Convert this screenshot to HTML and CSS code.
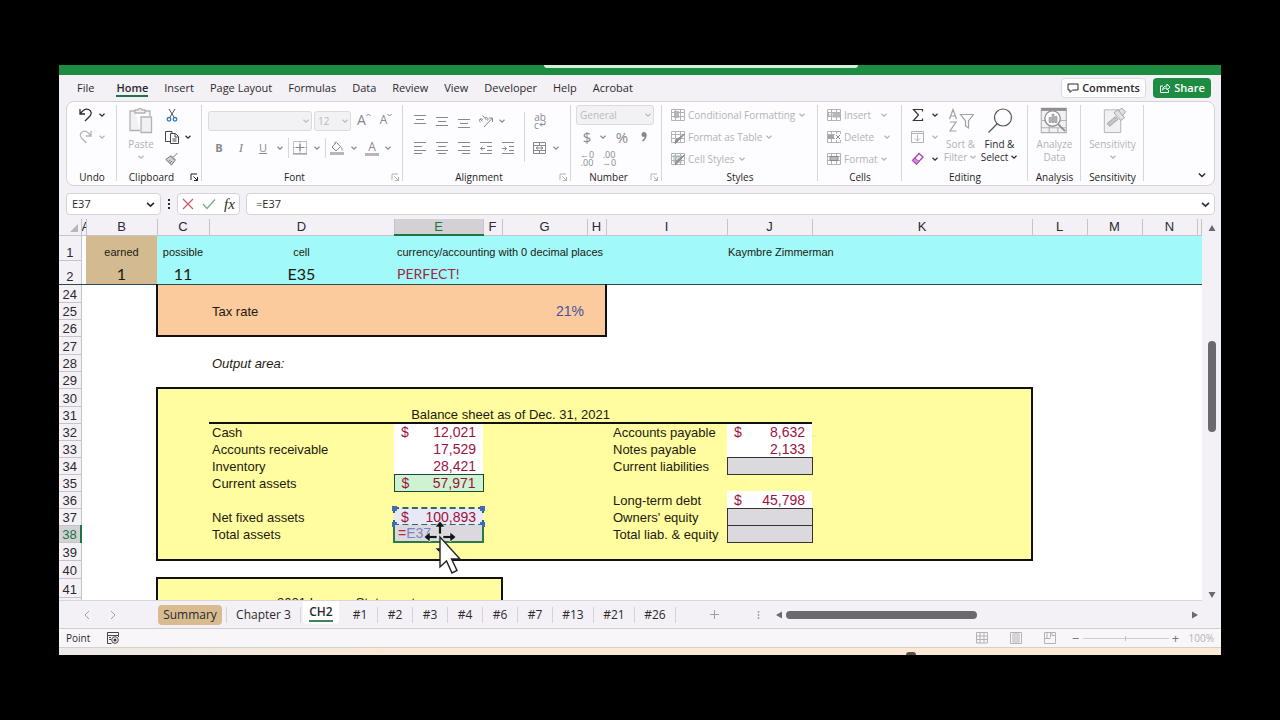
FILE: index.html
```html
<!DOCTYPE html>
<html lang="en">
<head>
<meta charset="utf-8">
<title>Workbook</title>
<link rel="stylesheet" href="styles.css">
</head>
<body>
<svg class="defs" aria-hidden="true">
  <symbol id="chev" viewBox="0 0 8 8"><path d="M1.5 2.8 4 5.2 6.5 2.8" fill="none" stroke="currentColor" stroke-width="1.2"/></symbol>
  <symbol id="launch" viewBox="0 0 9 9"><path d="M1 7V1h6M3.500 3.500 7.500 7.500M7.500 4v3.500H4" fill="none" stroke="currentColor"/></symbol>
  <symbol id="undo" viewBox="0 0 16 16"><path d="M2 2v5h5M2.300 6.700C5 3 8 1.500 10.500 2.500c3 1.200 3.500 4.500 1.500 6.500L7 14" fill="none" stroke="currentColor" stroke-width="1.300"/></symbol>
  <symbol id="redo" viewBox="0 0 16 16"><path d="M13 2v5H8M12.700 6.700C10 3 7.500 1.500 5 2.500 2 3.700 1.500 7 3.500 9l5 5" fill="none" stroke="currentColor" stroke-width="1.300"/></symbol>
  <symbol id="table" viewBox="0 0 14 14"><path d="M.5 1.500h13v11H.5zM.5 4.500h13M.5 8.500h13M4.500 1.500v11M9.500 1.500v11" fill="none" stroke="currentColor"/></symbol>
  <symbol id="more" viewBox="0 0 4 12"><path d="M1 1h2v2H1zM1 5h2v2H1zM1 9h2v2H1z" fill="currentColor"/></symbol>
</svg>
<main class="app">
  <header class="titlebar"><span class="search"></span></header>
  <nav class="menu">
    <button class="file">File</button><button class="current">Home</button><button>Insert</button><button>Page Layout</button><button>Formulas</button><button>Data</button><button>Review</button><button>View</button><button>Developer</button><button>Help</button><button>Acrobat</button>
    <span class="grow"></span>
    <button class="comments"><svg width="12" height="12" viewBox="0 0 12 12"><path d="M1 2h10v6H5.500L3 10.500V8H1z" fill="none" stroke="currentColor"/></svg>Comments</button>
    <button class="share"><svg width="12" height="12" viewBox="0 0 12 12"><path d="M4 4H1.500v6.500h8V8M3.500 8C4 5 5.500 4 8 4V2l3 3.200L8 8V6C6 6 5 6.500 3.500 8z" fill="none" stroke="currentColor"/></svg>Share</button>
  </nav>

  <section class="ribbon">
    <div class="group undo">
      <div class="tools">
        <div class="row3"><button class="ic" aria-label="Undo"><svg width="16" height="16"><use href="#undo"/></svg></button><button class="cv" aria-label="Undo list"><svg width="8" height="8"><use href="#chev"/></svg></button></div>
        <div class="row3 off"><button class="ic" aria-label="Redo"><svg width="16" height="16"><use href="#redo"/></svg></button><button class="cv" aria-label="Redo list"><svg width="8" height="8"><use href="#chev"/></svg></button></div>
      </div>
      <div class="name"><span>Undo</span></div>
    </div>

    <div class="group clip">
      <div class="tools side">
        <button class="big off"><svg width="26" height="27" viewBox="0 0 26 27"><path d="M7 4H2v19.500h10M17 4h5v5M7 6V3h3c0-2 4-2 4 0h3v3zM13 10h10.500v15.500H13z" fill="#f1f0f2" stroke="currentColor" stroke-width="1.300"/></svg><span>Paste</span><svg class="below" width="8" height="8"><use href="#chev"/></svg></button>
        <div>
          <div class="row3"><button class="ic" aria-label="Cut"><svg width="14" height="16" viewBox="0 0 14 16"><path d="M4 2l5.500 9M10 2l-5.500 9" stroke="#555" fill="none"/><circle cx="4" cy="12.300" r="1.800" fill="none" stroke="#2f7fc0" stroke-width="1.300"/><circle cx="10" cy="12.300" r="1.800" fill="none" stroke="#2f7fc0" stroke-width="1.300"/></svg></button></div>
          <div class="row3"><button class="ic" aria-label="Copy"><svg width="14" height="14" viewBox="0 0 14 14"><path d="M5 11.500H.5V1.500H7V3M5.500 3.500h5l3 3v7h-8zM10 3.500V7h3.500M7.500 9h4M7.500 11h4" fill="none" stroke="#444"/></svg></button><button class="cv" aria-label="Copy list"><svg width="8" height="8"><use href="#chev"/></svg></button></div>
          <div class="row3"><button class="ic off" aria-label="Format painter"><svg width="14" height="14" viewBox="0 0 14 14"><path d="M12.500 1 8.500 5M6 3.500 10.500 8M5.500 4 10 8.500 6.500 13 .8 7.500zM3.500 9.500l2-1.500M5 11l2-2" fill="#d5d3d7" stroke="#77757a"/></svg></button></div>
        </div>
      </div>
      <div class="name"><span>Clipboard</span><button class="launch" aria-label="Clipboard settings"><svg width="9" height="9"><use href="#launch"/></svg></button></div>
    </div>

    <div class="group font">
      <div class="tools two">
        <div class="row2">
          <span class="combo face"><select aria-label="Font" disabled><option></option></select><svg width="8" height="8"><use href="#chev"/></svg></span>
          <span class="combo size"><select aria-label="Font size" disabled><option>12</option></select><svg width="8" height="8"><use href="#chev"/></svg></span>
          <button class="ic mid letter" aria-label="Increase font size">A<svg width="5" height="8" viewBox="0 0 5 8"><path d="M.5 3l2-2 2 2" fill="none" stroke="currentColor"/></svg></button>
          <button class="ic mid letter small" aria-label="Decrease font size">A<svg width="5" height="8" viewBox="0 0 5 8"><path d="M.5 1l2 2 2-2" fill="none" stroke="currentColor"/></svg></button>
        </div>
        <div class="row2 mid">
          <button class="ic"><b>B</b></button><button class="ic"><i>I</i></button><button class="ic"><u>U</u></button><button class="cv" aria-label="Underline list"><svg width="8" height="8"><use href="#chev"/></svg></button>
          <span class="bar"></span>
          <button class="ic" aria-label="Borders"><svg width="14" height="14" viewBox="0 0 14 14"><path d="M.5.5h13v12H.5zM7 .5v12M.5 6.500h13" fill="none" stroke="currentColor" stroke-dasharray="1 1"/><path d="M0 13h14M7 3v7M3 6.500h8" stroke="currentColor" stroke-width="1.200"/></svg></button><button class="cv" aria-label="Borders list"><svg width="8" height="8"><use href="#chev"/></svg></button>
          <span class="bar"></span>
          <button class="ic" aria-label="Fill color"><svg width="14" height="14" viewBox="0 0 14 14"><path d="M6.500 1.500 2 6l4 4 4.500-4.500zM5 3V.5M10.500 6c2 1 1.500 2 1.500 3.500" fill="none" stroke="currentColor"/><path d="M0 11h14v3H0z" fill="#b9b7ba"/></svg></button><button class="cv" aria-label="Fill color list"><svg width="8" height="8"><use href="#chev"/></svg></button>
          <button class="ic fc" aria-label="Font color">A</button><button class="cv" aria-label="Font color list"><svg width="8" height="8"><use href="#chev"/></svg></button>
        </div>
      </div>
      <div class="name"><span>Font</span><button class="launch off" aria-label="Font settings"><svg width="9" height="9"><use href="#launch"/></svg></button></div>
    </div>

    <div class="group align">
      <div class="tools side">
        <div class="two mid">
          <div class="row2">
            <button class="ic" aria-label="Top align"><svg width="12" height="14" viewBox="0 0 12 14"><path d="M0 1.500h12M2 5.500h8M0 9.500h12" stroke="currentColor"/></svg></button><button class="ic" aria-label="Middle align"><svg width="12" height="14" viewBox="0 0 12 14"><path d="M0 3.500h12M2 7.500h8M0 11.500h12" stroke="currentColor"/></svg></button><button class="ic" aria-label="Bottom align"><svg width="12" height="14" viewBox="0 0 12 14"><path d="M0 5.500h12M2 9.500h8M0 13.500h12" stroke="currentColor"/></svg></button><button class="ic" aria-label="Orientation"><svg width="15" height="14" viewBox="0 0 15 14"><path d="M5 13 13.500 4M13.500 8V4H10M3.500 7.500 1 5M1.500 8a1.700 1.700 0 1 1 2.200-2M3.500 1.500l4 4.500M6 4a1.700 1.700 0 1 1 2.500 2.500" fill="none" stroke="currentColor"/></svg></button><button class="cv near" aria-label="Orientation list"><svg width="8" height="8"><use href="#chev"/></svg></button>
          </div>
          <div class="row2">
            <button class="ic" aria-label="Align left"><svg width="12" height="12" viewBox="0 0 12 12"><path d="M0 .5h12M0 4.500h8M0 8.500h12M0 11.500h8" stroke="currentColor"/></svg></button><button class="ic" aria-label="Center"><svg width="12" height="12" viewBox="0 0 12 12"><path d="M0 .5h12M2 4.500h8M0 8.500h12M2 11.500h8" stroke="currentColor"/></svg></button><button class="ic" aria-label="Align right"><svg width="12" height="12" viewBox="0 0 12 12"><path d="M0 .5h12M4 4.500h8M0 8.500h12M4 11.500h8" stroke="currentColor"/></svg></button><button class="ic" aria-label="Decrease indent"><svg width="12" height="12" viewBox="0 0 12 12"><path d="M0 .5h12M7 4.500h5M7 8.500h5M0 11.500h12M5 6.500H.5M2.500 4.500l-2 2 2 2" fill="none" stroke="currentColor"/></svg></button><button class="ic" aria-label="Increase indent"><svg width="12" height="12" viewBox="0 0 12 12"><path d="M0 .5h12M7 4.500h5M7 8.500h5M0 11.500h12M0 6.500h4.500M2.500 4.500l2 2-2 2" fill="none" stroke="currentColor"/></svg></button>
          </div>
        </div>
        <span class="bar tall"></span>
        <div class="two mid">
          <div class="row2"><button class="ic wrap" aria-label="Wrap text"><span>ab</span><span>c<svg width="7" height="7" viewBox="0 0 7 7"><path d="M6 0v3.500H1M3 1.500l-2 2 2 2" fill="none" stroke="#6f8fae"/></svg></span></button></div>
          <div class="row2"><button class="ic" aria-label="Merge and center"><svg width="14" height="14" viewBox="0 0 14 14"><path d="M.5 1.500h12v11H.5zM.5 4.500h12M.5 9.500h12M6.500 1.500v3M6.500 9.500v3M3 7h7M5 5.500 3 7l2 1.500M8 5.500 10 7 8 8.500" fill="none" stroke="currentColor"/></svg></button><button class="cv near" aria-label="Merge list"><svg width="8" height="8"><use href="#chev"/></svg></button></div>
        </div>
      </div>
      <div class="name"><span>Alignment</span><button class="launch off" aria-label="Alignment settings"><svg width="9" height="9"><use href="#launch"/></svg></button></div>
    </div>

    <div class="group number">
      <div class="tools">
        <div class="row3"><span class="combo format"><select aria-label="Number format" disabled><option>General</option></select><svg width="8" height="8"><use href="#chev"/></svg></span></div>
        <div class="row3 mid signs"><button class="ic">$</button><button class="cv" aria-label="Currency list"><svg width="8" height="8"><use href="#chev"/></svg></button><button class="ic">%</button><button class="ic comma" aria-label="Comma style"><svg width="8" height="12" viewBox="0 0 8 12"><circle cx="4" cy="3.500" r="2.500" fill="currentColor"/><path d="M5.800 3.500c.2 3-1 5-3.300 6.500" stroke="currentColor" stroke-width="1.500" fill="none"/></svg></button></div>
        <div class="row3 mid"><button class="ic dec" aria-label="Increase decimal"><span>←0</span><span>.00</span></button><button class="ic dec" aria-label="Decrease decimal"><span>.00</span><span>→0</span></button></div>
      </div>
      <div class="name"><span>Number</span><button class="launch off" aria-label="Number settings"><svg width="9" height="9"><use href="#launch"/></svg></button></div>
    </div>

    <div class="group styles">
      <div class="tools">
        <button class="row3 item off"><svg width="14" height="14" viewBox="0 0 14 14"><path d="M3 3h5v7H3z" fill="#b9b7bc"/><use href="#table"/></svg>Conditional Formatting<svg width="8" height="8"><use href="#chev"/></svg></button>
        <button class="row3 item off"><svg width="14" height="14" viewBox="0 0 14 14"><use href="#table"/><path d="M13.500 4 6 12l-2 1.500L5 10z" fill="#9d9ba0" stroke="#8a888d"/></svg>Format as Table<svg width="8" height="8"><use href="#chev"/></svg></button>
        <button class="row3 item off"><svg width="14" height="14" viewBox="0 0 14 14"><path d="M2 3h9v8H2z" fill="#cdd5df"/><use href="#table"/><path d="M13.500 3 6 11.500 4 13l1-3.500z" fill="#9d9ba0" stroke="#8a888d"/></svg>Cell Styles<svg width="8" height="8"><use href="#chev"/></svg></button>
      </div>
      <div class="name"><span>Styles</span></div>
    </div>

    <div class="group cells">
      <div class="tools">
        <button class="row3 item off"><svg width="14" height="14" viewBox="0 0 14 14"><use href="#table"/><path d="M6 5h7v4H6zM5 7H0M2 5 0 7l2 2" fill="#b9b7bc" stroke="currentColor"/></svg><span>Insert</span><svg width="8" height="8"><use href="#chev"/></svg></button>
        <button class="row3 item off"><svg width="14" height="14" viewBox="0 0 14 14"><use href="#table"/><path d="M1 5h6v4H1z" fill="#a5a3a8"/><path d="M8 4h6v6H8z" fill="#fff"/><path d="m9 5 4 4M13 5 9 9" stroke="#88868b"/></svg><span class="wide">Delete</span><svg width="8" height="8"><use href="#chev"/></svg></button>
        <button class="row3 item off"><svg width="14" height="14" viewBox="0 0 14 14"><use href="#table"/><path d="M3 4.500h8v4H3z" fill="#b9b7bc" stroke="#88868b"/></svg><span>Format</span><svg width="8" height="8"><use href="#chev"/></svg></button>
      </div>
      <div class="name"><span>Cells</span></div>
    </div>

    <div class="group editing">
      <div class="tools side">
        <div>
          <div class="row3"><button class="ic" aria-label="AutoSum"><svg width="12" height="14" viewBox="0 0 12 14"><path d="M10.500 3.500V1.500H1.500L6.500 7l-5 5.500h9v-2" fill="none" stroke="#333" stroke-width="1.200"/></svg></button><button class="cv" aria-label="AutoSum list"><svg width="8" height="8"><use href="#chev"/></svg></button></div>
          <div class="row3 off"><button class="ic" aria-label="Fill"><svg width="14" height="12" viewBox="0 0 14 12"><path d="M.5.5h12v11H.5zM.5 2.500h12M6.500 4v6M4 7.500 6.500 10 9 7.500" fill="none" stroke="currentColor"/></svg></button><button class="cv" aria-label="Fill list"><svg width="8" height="8"><use href="#chev"/></svg></button></div>
          <div class="row3"><button class="ic" aria-label="Clear"><svg width="14" height="14" viewBox="0 0 14 14"><path d="M1.500 8.500 8 1.500l4 3.500-6.500 7z" fill="#fff" stroke="#a545ae" stroke-width="1.300"/><path d="M1.500 8.500 4 6l4 3.500L5.500 12z" fill="#d08ad6" stroke="#a545ae"/></svg></button><button class="cv" aria-label="Clear list"><svg width="8" height="8"><use href="#chev"/></svg></button></div>
        </div>
        <button class="big off"><svg width="26" height="27" viewBox="0 0 26 27"><path d="M1.500 12 5 2.500 8.500 12M2.500 9h5M2 15h6L2 24h6.500M12.500 7.500h13L20.500 14v7l-3-2v-5z" fill="none" stroke="#a19fa4" stroke-width="1.200"/></svg><span>Sort &amp;</span><span>Filter<svg width="8" height="8"><use href="#chev"/></svg></span></button>
        <button class="big"><svg width="26" height="27" viewBox="0 0 26 27"><circle cx="16" cy="10.500" r="8.500" fill="none" stroke="#555" stroke-width="1.200"/><path d="M10 17 1.500 25.500" stroke="#555" stroke-width="1.300"/></svg><span>Find &amp;</span><span>Select<svg width="8" height="8"><use href="#chev"/></svg></span></button>
      </div>
      <div class="name"><span>Editing</span></div>
    </div>

    <div class="group analysis">
      <div class="tools side">
        <button class="big off"><svg width="28" height="28" viewBox="0 0 28 28"><path d="M.8 1.500h26v25H.8zM.8 21.500h26M.8 14h7M20 14h7M9 19v7.500M18 21v5.500" fill="#f1f0f2" stroke="currentColor" stroke-width="1.200"/><path d="M.8 1h26v3H.8z" fill="#8f8d92"/><circle cx="12.500" cy="12" r="8" fill="#fff" stroke="#918f94" stroke-width="1.400"/><path d="m18.500 18 7 7" stroke="#918f94" stroke-width="2"/><path d="M9 11h2v5H9zM12 7.500h2V16h-2zM15 10h2v6h-2z" fill="#c9c7cc" stroke="#88868b" stroke-width=".8"/></svg><span>Analyze</span><span>Data</span></button>
      </div>
      <div class="name"><span>Analysis</span></div>
    </div>

    <div class="group sensitivity">
      <div class="tools side">
        <button class="big off"><svg width="28" height="28" viewBox="0 0 28 28"><path d="M5 3h17v23.500H5z" fill="#f1f0f2" stroke="currentColor"/><path d="m8 17 8.500-7 2.500 3-8.500 7z" fill="#c5c3c8" stroke="#a3a1a6"/><path d="m15 6 4-3 7 8-4 3zM20 4l3-3 4 4-3 4" fill="#e2e1e4" stroke="#a3a1a6"/></svg><span>Sensitivity</span><svg class="below" width="8" height="8"><use href="#chev"/></svg></button>
      </div>
      <div class="name"><span>Sensitivity</span></div>
    </div>
    <button class="collapse" aria-label="Collapse ribbon"><svg width="10" height="10" viewBox="0 0 8 8"><use href="#chev"/></svg></button>
  </section>

  <section class="formulabar">
    <div class="box namebox"><input aria-label="Name box" value="E37"><button aria-label="Names"><svg width="11" height="11"><use href="#chev"/></svg></button></div>
    <svg class="dots" width="4" height="12"><use href="#more"/></svg>
    <div class="box actions">
      <button aria-label="Cancel"><svg width="12" height="12" viewBox="0 0 12 12"><path d="m1 1 10 10M11 1 1 11" stroke="#d0566a" stroke-width="1.200"/></svg></button>
      <button aria-label="Enter"><svg width="14" height="12" viewBox="0 0 14 12"><path d="m1 6 4 4.500L13 1.500" fill="none" stroke="#6fae84" stroke-width="1.200"/></svg></button>
      <button class="fx"><i>fx</i></button>
    </div>
    <div class="box formula"><input aria-label="Formula" value="=E37"><button aria-label="Expand formula bar"><svg width="11" height="11"><use href="#chev"/></svg></button></div>
  </section>

  <section class="sheet">
    <div class="gridwrap">
    <table class="grid">
      <colgroup><col class="cr"><col class="ca"><col class="cb"><col class="cc"><col class="cd"><col class="ce"><col class="cf"><col class="cg"><col class="cf"><col class="ci"><col class="cg"><col class="ck"><col class="cl"><col class="cl"><col class="cl"><col></colgroup>
      <thead>
        <tr><th class="corner"><svg width="8" height="8" viewBox="0 0 8 8"><path d="M8 0v8H0z" fill="#b8b6ba"/></svg></th><th>A</th><th>B</th><th>C</th><th>D</th><th class="sel">E</th><th>F</th><th>G</th><th>H</th><th>I</th><th>J</th><th>K</th><th>L</th><th>M</th><th>N</th><th></th></tr>
      </thead>
      <tbody>
        <tr class="h25 info"><th>1</th><td></td><td class="tan">earned</td><td class="cyan">possible</td><td class="cyan">cell</td><td class="cyan left" colspan="5">currency/accounting with 0 decimal places</td><td class="cyan flush" colspan="2">Kaymbre Zimmerman</td><td class="cyan" colspan="4"></td></tr>
        <tr class="h24 score"><th>2</th><td></td><td class="tan">1</td><td class="cyan">11</td><td class="cyan">E35</td><td class="cyan left" colspan="5">PERFECT!</td><td class="cyan" colspan="6"></td></tr>
        <tr class="h18"><th>24</th><td colspan="2"></td><td class="orange L"></td><td class="orange R" colspan="5"></td><td colspan="7"></td></tr>
        <tr><th>25</th><td colspan="2"></td><td class="orange L"></td><td class="orange" colspan="2">Tax rate</td><td class="orange rate" colspan="2">21%</td><td class="orange R"></td><td colspan="7"></td></tr>
        <tr><th>26</th><td colspan="2"></td><td class="orange L B"></td><td class="orange B R" colspan="5"></td><td colspan="7"></td></tr>
        <tr class="h18"><th>27</th><td colspan="15"></td></tr>
        <tr><th>28</th><td colspan="3"></td><td colspan="12"><i>Output area:</i></td></tr>
        <tr><th>29</th><td colspan="15"></td></tr>
        <tr class="h18"><th>30</th><td colspan="2"></td><td class="yellow L T R" colspan="9"></td><td colspan="4"></td></tr>
        <tr><th>31</th><td colspan="2"></td><td class="yellow L"></td><td class="yellow B center" colspan="7">Balance sheet as of Dec. 31, 2021</td><td class="yellow R"></td><td colspan="4"></td></tr>
        <tr><th>32</th><td colspan="2"></td><td class="yellow L"></td><td class="yellow">Cash</td><td class="white"><div class="money"><span>$</span><span>12,021</span></div></td><td class="yellow" colspan="3"></td><td class="yellow label">Accounts payable</td><td class="white"><div class="money"><span>$</span><span>8,632</span></div></td><td class="yellow R"></td><td colspan="4"></td></tr>
        <tr><th>33</th><td colspan="2"></td><td class="yellow L"></td><td class="yellow">Accounts receivable</td><td class="white"><div class="money"><span></span><span>17,529</span></div></td><td class="yellow" colspan="3"></td><td class="yellow label">Notes payable</td><td class="white"><div class="money"><span></span><span>2,133</span></div></td><td class="yellow R"></td><td colspan="4"></td></tr>
        <tr><th>34</th><td colspan="2"></td><td class="yellow L"></td><td class="yellow">Inventory</td><td class="white"><div class="money"><span></span><span>28,421</span></div></td><td class="yellow" colspan="3"></td><td class="yellow label">Current liabilities</td><td class="answer"></td><td class="yellow R"></td><td colspan="4"></td></tr>
        <tr><th>35</th><td colspan="2"></td><td class="yellow L"></td><td class="yellow">Current assets</td><td class="answer ok"><div class="money"><span>$</span><span>57,971</span></div></td><td class="yellow" colspan="5"></td><td class="yellow R"></td><td colspan="4"></td></tr>
        <tr><th>36</th><td colspan="2"></td><td class="yellow L"></td><td class="yellow" colspan="5"></td><td class="yellow label">Long-term debt</td><td class="white"><div class="money"><span>$</span><span>45,798</span></div></td><td class="yellow R"></td><td colspan="4"></td></tr>
        <tr><th>37</th><td colspan="2"></td><td class="yellow L"></td><td class="yellow">Net fixed assets</td><td class="picked"><div class="money"><span>$</span><span>100,893</span></div><div class="ants"><s></s><s></s><s></s><s></s></div></td><td class="yellow" colspan="3"></td><td class="yellow label">Owners' equity</td><td class="answer"></td><td class="yellow R"></td><td colspan="4"></td></tr>
        <tr><th class="sel">38</th><td colspan="2"></td><td class="yellow L"></td><td class="yellow">Total assets</td><td class="answer editing-cell"><span class="red">=</span>E37
          <svg class="pointer" width="40" height="54" viewBox="0 0 40 54"><path d="m17 0 5 6h-3.500v7h-3V6H12zM1 16l6-5v3.500h7v3H7V21zM33 16l-6-5v3.500h-7v3h7V21zM12 27h5v5z" fill="#151515" stroke="#fff" stroke-width=".6"/><path d="M17 16v30l6.500-6 5.500 12 5-2.500L28.500 38H37z" fill="#fff" stroke="#222" stroke-width="1.400"/></svg></td><td class="yellow" colspan="3"></td><td class="yellow label">Total liab. &amp; equity</td><td class="answer"></td><td class="yellow R"></td><td colspan="4"></td></tr>
        <tr class="h18"><th>39</th><td colspan="2"></td><td class="yellow L B R" colspan="9"></td><td colspan="4"></td></tr>
        <tr class="h18"><th>40</th><td colspan="15"></td></tr>
        <tr class="h19"><th>41</th><td colspan="2"></td><td class="yellow L T R" colspan="4"></td><td colspan="9"></td></tr>
        <tr><th></th><td colspan="2"></td><td class="yellow L"></td><td class="yellow center heading" colspan="2">2021 Income Statement</td><td class="yellow R"></td><td colspan="9"></td></tr>
      </tbody>
    </table>
    </div>
    <div class="vscroll"><svg width="8" height="8" viewBox="0 0 8 8"><path d="m4 1 3.500 6h-7z" fill="#6b696e"/></svg><div class="vtrack"><div class="vthumb"></div></div><svg width="8" height="8" viewBox="0 0 8 8"><path d="m4 7 3.500-6h-7z" fill="#6b696e"/></svg></div>
  </section>

  <nav class="tabs">
    <button class="arrow" aria-label="Previous sheets"><svg width="8" height="10" viewBox="0 0 8 10"><path d="M6 1 2 5l4 4" fill="none" stroke="currentColor"/></svg></button>
    <button class="arrow" aria-label="Next sheets"><svg width="8" height="10" viewBox="0 0 8 10"><path d="m2 1 4 4-4 4" fill="none" stroke="currentColor"/></svg></button>
    <div class="tabset">
      <button class="summary">Summary</button><button class="chapter">Chapter 3</button><button class="active"><span>CH2</span></button><button>#1</button><button>#2</button><button>#3</button><button>#4</button><button>#6</button><button>#7</button><button class="w40">#13</button><button class="w40">#21</button><button class="w40">#26</button>
    </div>
    <button class="add" aria-label="New sheet"><svg width="9" height="9" viewBox="0 0 9 9"><path d="M4.500 0v9M0 4.500h9" stroke="#a09ea3"/></svg></button>
    <svg class="grip" width="3" height="10" viewBox="0 0 4 12"><use href="#more"/></svg>
    <div class="hscroll"><svg width="8" height="8" viewBox="0 0 8 8"><path d="M1 4 7 .5v7z" fill="#6b696e"/></svg><div class="htrack"><div class="hthumb"></div></div><svg width="8" height="8" viewBox="0 0 8 8"><path d="M7 4 1 .5v7z" fill="#6b696e"/></svg></div>
  </nav>

  <footer class="status">
    <span class="mode">Point</span>
    <svg width="12" height="12" viewBox="0 0 12 12"><path d="M.5.500h11v3H.5zM.5 3.500v8h4M2 5.500h2M2 7.500h2M11.500 3.500V5" fill="none" stroke="#444"/><circle cx="8" cy="8" r="3.300" fill="none" stroke="#444"/><circle cx="8" cy="8" r="1.500" fill="#333"/></svg>
    <span class="grow"></span>
    <div class="views">
      <button aria-label="Normal view"><svg width="12" height="12" viewBox="0 0 12 12"><path d="M.5.500h11v10.500H.5zM.5 4h11M.5 7.500h11M4 .5V11M8 .5V11" fill="none" stroke="currentColor"/></svg></button>
      <button aria-label="Page layout view"><svg width="12" height="12" viewBox="0 0 12 12"><path d="M.5.500h11v11H.5zM3 2h6v8H3zM4 4h4M4 6h4M4 8h4" fill="none" stroke="currentColor"/></svg></button>
      <button aria-label="Page break view"><svg width="12" height="12" viewBox="0 0 12 12"><path d="M.5.500h11v11H.5zM3 .5v6M6.500.5v5M.5 6.500h6M8 .5v3h3.500" fill="none" stroke="currentColor"/></svg></button>
    </div>
    <button class="zoombtn">−</button><input class="zoom" type="range" min="0" max="200" value="100" aria-label="Zoom"><button class="zoombtn">+</button>
    <span class="percent">100%</span>
  </footer>
  <div class="taskbar"><span></span></div>
</main>
</body>
</html>
```
FILE: styles.css
```css
* { box-sizing: border-box; }
body {
  margin: 0;
  height: 100vh;
  padding: 65px 59px;
  background: #000;
  display: flex;
  font: 11px/14px "Open Sans", "Noto Sans", sans-serif;
  color: #2b292d;
}
button, input, select { font: inherit; color: inherit; background: none; border: 0; padding: 0; margin: 0; }
button { display: inline-flex; align-items: center; justify-content: center; white-space: nowrap; }
svg { flex: none; display: block; }
.defs { position: absolute; width: 0; height: 0; }
.grow { flex: 1; }
.off { color: #b4b2b7; }
.mid { color: #8a888d; }
.app { flex: 1; min-width: 0; display: flex; flex-direction: column; background: #f3f1f5; overflow: hidden; }

.titlebar { height: 10px; background: #1c8c40; display: flex; justify-content: center; padding-left: 122px; }
.search { width: 314px; height: 3px; background: #d3f0da; border-radius: 0 0 3px 3px; }

.menu { height: 26px; display: flex; align-items: center; gap: 16px; padding: 0 10px 0 18px; }
.menu .file { margin-right: 6px; }
.menu .current { font-weight: 600; box-shadow: 0 2px 0 #217346; }
.menu .comments, .menu .share { height: 20px; gap: 3px; border-radius: 4px; font-weight: 600; }
.menu .comments { width: 85px; background: #fff; border: 1px solid #dddbe0; }
.menu .share { width: 58px; background: #1c8c40; color: #fff; margin-left: -9px; }

.ribbon { display: flex; margin: 0 6px 0 7px; height: 85px; padding-top: 2px; background: #fdfcfe; border: 1px solid #d5d3d8; border-radius: 8px; }
.group { display: flex; flex-direction: column; flex: none; background: linear-gradient(#d8d6da, #d8d6da) right 1px / 1px 76px no-repeat; }
.tools { height: 66px; }
.side { display: flex; }
.row3 { display: flex; align-items: center; height: 22px; }
.two { padding-top: 3px; }
.row2 { display: flex; align-items: center; height: 27px; }
.ic { width: 22px; height: 20px; }
.cv { width: 12px; height: 20px; }
.name { display: flex; height: 14px; position: relative; justify-content: center; color: #1f1d21; font-size: 10px; font-weight: 500; }
.clip .name, .font .name, .align .name, .number .name { padding-right: 16px; }
.launch { position: absolute; right: 3px; top: 3px; }
.big { flex-direction: column; justify-content: flex-start; padding-top: 3px; font-size: 10px; }
.big > svg:first-child { margin-bottom: 3px; height: 27px; }
.big span { display: flex; align-items: center; gap: 2px; height: 13px; }
.big .below { margin-top: 3px; }
.combo { display: grid; height: 20px; align-items: center; border: 1px solid #dcdade; border-radius: 3px; background: #f2f1f4; color: #bbb9be; font-size: 10px; }
.combo select { grid-area: 1 / 1; width: 100%; height: 18px; padding-left: 3px; appearance: none; opacity: 1; }
.combo svg { grid-area: 1 / 1; justify-self: end; margin-right: 1px; }
.face { width: 104px; }
.size { width: 37px; margin: 0 2px; }
.format { width: 78px; }

.undo { width: 50px; }
.undo .row3 { padding-left: 8px; }
.undo .ic { width: 21px; }
.clip { width: 85px; }
.clip .big { width: 30px; margin: 0 5px 0 9px; }
.clip .cv { width: 10px; }
.font { width: 201px; }
.font .row2 { padding-left: 6px; }
.font .letter { font-size: 14px; align-items: flex-start; padding-top: 2px; }
.font .small { font-size: 12px; }
.font i { font-family: "Liberation Serif", serif; font-size: 13px; }
.font .bar { margin-left: 2px; }
.font .fc { width: 14px; height: 16px; margin: 0 3px 0 5px; font-size: 12px; align-items: flex-start; box-shadow: inset 0 -3px 0 #b9b7ba; }
.bar { width: 1px; height: 20px; background: #d8d6da; }
.bar.tall { height: 50px; margin: 8px 4px 0 5px; }
.near { width: 10px; }
.align { width: 168px; }
.align .side { padding-left: 6px; }
.wrap { flex-direction: column; font-size: 10px; }
.wrap span { display: flex; line-height: 8px; }
.number { width: 91px; }
.number .row3 { padding-left: 5px; }
.number .signs .ic { font-size: 15px; }
.number .cv { width: 10px; margin-right: 3px; }
.number .dec { flex-direction: column; font-size: 9px; }
.number .dec span { line-height: 8px; }
.item { gap: 3px; padding-left: 9px; font-size: 10px; }
.styles { width: 156px; }
.cells { width: 84px; }
.cells .item span { width: 33px; text-align: left; }
.cells .item .wide { width: 36px; }
.editing { width: 126px; }
.editing .side { padding-left: 5px; }
.editing .big { width: 39px; }
.analysis { width: 53px; }
.sensitivity { width: 63px; }
.analysis .side, .sensitivity .side { justify-content: center; }
.collapse { margin: 66px 7px 0 auto; align-self: flex-start; }

.formulabar { display: flex; align-items: center; gap: 6px; padding: 7px 6px 4px 7px; }
.box { height: 22px; display: flex; align-items: center; background: #fff; border: 1px solid #d5d3d8; border-radius: 4px; }
.box input { flex: 1; min-width: 0; }
.namebox { width: 95px; padding: 0 4px 0 5px; }
.actions { width: 63px; justify-content: space-around; }
.fx { font-family: "Liberation Serif", serif; font-size: 15px; }
.formula { flex: 1; padding: 0 3px 0 9px; }

.sheet { flex: 1 1 0; min-height: 0; display: flex; overflow: hidden; }
.gridwrap { flex: 1; min-width: 0; overflow: hidden; background: #fff; border-bottom: 1px solid #d8d6da; }
.grid { width: 100%; table-layout: fixed; border-collapse: collapse; font: 13px/15px "Liberation Sans", Arial, sans-serif; color: #1c1a10; }
.cr { width: 22px; }
.ca { width: 5px; }
.cb { width: 71px; }
.cc { width: 52px; }
.cd { width: 185px; }
.ce { width: 89px; }
.cf { width: 19px; }
.cg { width: 85px; }
.ci { width: 121px; }
.ck { width: 220px; }
.cl { width: 55px; }
.grid tr { height: 17px; }
.grid th { padding: 0; font-weight: 400; background: #f3f1f5; overflow: hidden; color: #2b292d; border-right: 1px solid #c6c4c8; border-bottom: 1px solid #c6c4c8; }
.grid thead tr { height: 16px; }
.grid thead th { line-height: 13px; }
.grid thead .sel { background: #d3d1d4; color: #217346; border-bottom: 2px solid #217346; }
.grid tbody th { vertical-align: bottom; }
.grid tbody .sel { background: #d3d1d4; color: #217346; border-right: 2px solid #217346; }
.corner svg { margin: 2px 3px 0 auto; }
.grid td { padding: 0 3px; white-space: nowrap; vertical-align: bottom; }
.grid .h18 { height: 18px; }
.grid .h19 { height: 19px; }
.grid .h24 { height: 24px; }
.grid .h25 { height: 25px; }
.grid .info td { font-size: 11px; line-height: 14px; text-align: center; padding-bottom: 1px; }
.grid .score td { font: 16px/20px Lato, sans-serif; text-align: center; }
.grid .score td, .grid .score th { border-bottom: 1px solid #2b4a4c; }
.grid .info .left, .grid .info .flush { text-align: left; }
.grid .info .flush { padding-left: 1px; }
.grid .score .left { text-align: left; color: #a3263c; font-size: 14px; }
.tan { background: #d3ba90; }
.cyan { background: #a2f9fa; }
.orange { background: #fbca9d; }
.yellow { background: #fffd9f; }
.white { background: #fff; }
.grid .L { border-left: 2px solid #111; }
.grid .R { border-right: 2px solid #111; }
.grid .T { border-top: 2px solid #111; }
.grid .B { border-bottom: 2px solid #111; }
.center { text-align: center; }
.grid .heading { vertical-align: top; line-height: 11px; }
.grid .rate { text-align: right; font-size: 14px; color: #4652a0; }
.grid .label { padding: 0 0 0 7px; }
.money { display: flex; justify-content: space-between; padding: 0 4px; font-size: 14px; color: #9c1140; }
.grid .answer { background: #dbd9de; border: 1px solid #333; }
.grid .ok { background: #cdf3d2; border-color: #1d4a2a; }
.red { color: #b02a4c; }
.picked { background: #e9e8f6; position: relative; }
.ants { position: absolute; inset: -1px; border: 2px dashed #2b6a63; }
.ants s { position: absolute; width: 5px; height: 5px; background: #3f6bbd; }
.ants s:nth-child(1) { left: -3px; top: -3px; }
.ants s:nth-child(2) { right: -3px; top: -3px; }
.ants s:nth-child(3) { left: -3px; bottom: -3px; }
.ants s:nth-child(4) { right: -3px; bottom: -3px; }
.grid .editing-cell { position: relative; font-size: 14px; color: #7a86c4; border: 2px solid #2c7a4b; border-top: 0; }
.pointer { position: absolute; left: 28px; top: -4px; z-index: 1; }

.vscroll { width: 19px; display: flex; flex-direction: column; align-items: center; padding: 5px 0 2px; }
.vtrack { flex: 1; padding-top: 109px; }
.vthumb { width: 8px; height: 91px; border-radius: 4px; background: #6b696e; }

.tabs { height: 27px; display: flex; align-items: center; font-size: 12px; }
.arrow { width: 26px; color: #a09ea3; }
.arrow:first-child { margin-left: 15px; }
.tabset { display: flex; margin-left: 32px; align-items: center; height: 27px; }
.tabset button { width: 35px; height: 16px; border-right: 1px solid #d5d3d8; }
.tabset .w40 { width: 41px; }
.tabset .summary { width: 64px; height: 20px; margin-right: 4px; border: 0; border-radius: 4px; background: #d8bc90; }
.tabset .chapter { width: 75px; border-left: 1px solid #d5d3d8; }
.tabset .active { width: 36px; height: 23px; margin: 0 4px 4px 2px; border: 0; background: #fff; border-radius: 0 0 4px 4px; font-weight: 600; }
.active span { border-bottom: 2px solid #3c8558; line-height: 17px; }
.add { margin-left: 34px; }
.grip { color: #8a888d; margin-left: 38px; }
.hscroll { flex: 1; display: flex; align-items: center; margin: 0 22px 0 15px; gap: 3px; }
.htrack { flex: 1; }
.hthumb { width: 191px; height: 8px; border-radius: 4px; background: #6b696e; }

.status { height: 19px; display: flex; align-items: center; padding: 0 7px; background: #f8f6f9; border-top: 1px solid #d0ced3; font-size: 10px; }
.mode { margin-right: 17px; }
.views { display: flex; gap: 22px; margin-right: 13px; color: #b4b2b7; }
.zoombtn { width: 14px; color: #77757a; font-size: 13px; }
.zoom { width: 86px; height: 10px; appearance: none; background: linear-gradient(#cfcdd2, #cfcdd2) center / 100% 1px no-repeat; }
.zoom::-webkit-slider-thumb { appearance: none; width: 1px; height: 5px; background: #c3c1c6; }
.percent { color: #b4b2b7; margin-left: 6px; }
.taskbar { height: 8px; border-top: 1px solid #d6d0cc; background: linear-gradient(90deg, #ece9e8, #fbe9d3 30%); display: flex; align-items: flex-end; justify-content: center; }
.taskbar span { width: 10px; height: 3px; margin-left: 542px; border-radius: 5px 5px 0 0; background: #55504c; }
```
